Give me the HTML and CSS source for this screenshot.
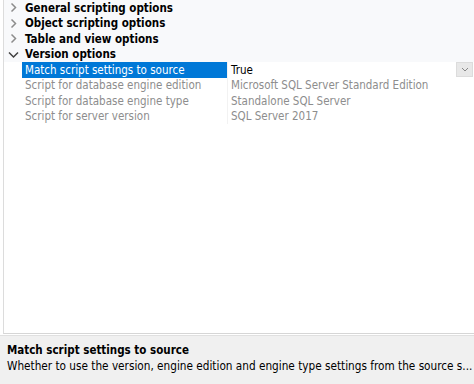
FILE: index.html
```html
<!DOCTYPE html>
<html lang="en">
  <head>
    <meta charset="UTF-8" />
    <title>Scripting options</title>
    <link rel="stylesheet" href="styles.css">
  </head>
  <body>
    <div class="props">
      <div class="props__grid">
        <div class="row row--category">
          <span class="row__toggle"><svg width="9" height="11" viewBox="0 0 9 11"><path d="M2.5 1.5l4 4-4 4" fill="none" stroke="#8c8c8c" stroke-width="1.5"/></svg></span>
          <span class="row__name">General scripting options</span>
        </div>
        <div class="row row--category">
          <span class="row__toggle"><svg width="9" height="11" viewBox="0 0 9 11"><path d="M2.5 1.5l4 4-4 4" fill="none" stroke="#8c8c8c" stroke-width="1.5"/></svg></span>
          <span class="row__name">Object scripting options</span>
        </div>
        <div class="row row--category">
          <span class="row__toggle"><svg width="9" height="11" viewBox="0 0 9 11"><path d="M2.5 1.5l4 4-4 4" fill="none" stroke="#8c8c8c" stroke-width="1.5"/></svg></span>
          <span class="row__name">Table and view options</span>
        </div>
        <div class="row row--category">
          <span class="row__toggle"><svg width="11" height="9" viewBox="0 0 11 9"><path d="M1 2.5l4.5 4.5 4.5-4.5" fill="none" stroke="#404040" stroke-width="1.5"/></svg></span>
          <span class="row__name">Version options</span>
        </div>
        <div class="row row--prop row--selected">
          <span class="row__label">Match script settings to source</span>
          <span class="row__value">True
            <span class="row__drop"><svg width="8" height="5" viewBox="0 0 8 5"><path d="M1 1l3 3 3-3" fill="none" stroke="#888" stroke-width="1"/></svg></span>
          </span>
        </div>
        <div class="row row--prop row--readonly">
          <span class="row__label">Script for database engine edition</span>
          <span class="row__value">Microsoft SQL Server Standard Edition</span>
        </div>
        <div class="row row--prop row--readonly">
          <span class="row__label">Script for database engine type</span>
          <span class="row__value">Standalone SQL Server</span>
        </div>
        <div class="row row--prop row--readonly">
          <span class="row__label">Script for server version</span>
          <span class="row__value">SQL Server 2017</span>
        </div>
      </div>
      <div class="props__help">
        <div class="help__title">Match script settings to source</div>
        <div class="help__text">Whether to use the version, engine edition and engine type settings from the source s...</div>
      </div>
    </div>
  </body>
</html>
```

FILE: styles.css
```css
* {
  box-sizing: border-box;
  margin: 0;
  padding: 0;
}
html,
body {
  width: 100%;
  height: 100%;
  background-color: #fff;
  font-family: "DejaVu Sans Condensed", "DejaVu Sans", sans-serif;
  font-size: 11.5px;
  color: #000;
}
.props {
  display: flex;
  flex-direction: column;
  height: 384px;
}
.props__grid {
  height: 334px;
  border-left: 1px solid #dcdcdc;
  margin-left: 3px;
  border-bottom: 1px solid #d6d6d6;
}
.row {
  display: flex;
  align-items: center;
  height: 15.5px;
}
.row--category {
  background-color: #f8f9fb;
  font-weight: bold;
}
.row__toggle {
  width: 21px;
  display: flex;
  justify-content: center;
  padding-right: 3px;
}
.row--prop {
  padding-left: 18px;
}
.row__label {
  width: 205px;
  height: 100%;
  padding-left: 3px;
  display: flex;
  align-items: center;
  white-space: nowrap;
  overflow: hidden;
}
.row__value {
  flex: 1;
  height: 100%;
  display: flex;
  align-items: center;
  padding-left: 3px;
  border-left: 1px solid #f2f2f2;
  position: relative;
}
.row--selected .row__label {
  background-color: #0078d7;
  color: #fff;
}
.row--readonly {
  color: #8d8d8d;
}
.row__drop {
  position: absolute;
  right: 1px;
  top: 0;
  width: 17px;
  height: 15px;
  background-color: #e8e8e8;
  border: 1px solid #dcdcdc;
  display: flex;
  align-items: center;
  justify-content: center;
}
.props__help {
  flex: 1;
  margin-top: 1px;
  background-color: #f0f0f0;
  border-top: 1px solid #e0e0e0;
  padding: 6px 7px;
}
.help__title {
  font-weight: bold;
  line-height: 16px;
}
.help__text {
  font-size: 11.7px;
  line-height: 16px;
  white-space: nowrap;
}
```
